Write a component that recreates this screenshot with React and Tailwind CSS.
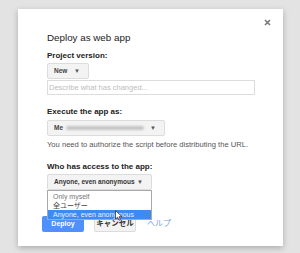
import React from "react";

const font = { fontFamily: '"Liberation Sans", Arial, "Noto Sans CJK JP", sans-serif' };

function Caret() {
  return <span className="text-[6px] text-[#555] leading-none">▼</span>;
}

function Select({ width, children }) {
  return (
    <div
      className={`flex items-center justify-between border border-[#dcdcdc] bg-[#f3f3f3] rounded-[2px] pl-[6px] pr-[8px] h-[16px] ${width}`}
    >
      {children}
      <Caret />
    </div>
  );
}

export default function App() {
  return (
    <div className="w-[300px] h-[253px] bg-[#e3e3e3] overflow-hidden pt-[9px] pl-[18px]" style={font}>
      <div className="relative w-[265px] h-[237px] bg-white shadow-[0_2px_6px_rgba(0,0,0,0.25)] pl-[29px] pt-[23px] text-[#222]">
        {/* close */}
        <button className="absolute top-[10px] right-[12px] w-[7px] h-[7px]">
          <svg viewBox="0 0 7 7" width="7" height="7">
            <path d="M1 1L6 6M6 1L1 6" stroke="#777" strokeWidth="1.6" />
          </svg>
        </button>

        <h2 className="text-[9.8px] leading-[12px] text-[#222]">Deploy as web app</h2>

        <div className="mt-[7px] text-[8px] leading-[10px] font-bold">Project version:</div>
        <div className="mt-[2px]">
          <Select width="w-[42px]">
            <span className="text-[6.5px] font-bold text-[#444]">New</span>
          </Select>
        </div>
        <div className="mt-[1px] w-[208px] h-[15px] border border-[#dcdcdc] flex items-center pl-[1px]">
          <span className="text-[7.5px] text-[#bdbdbd]">Describe what has changed...</span>
        </div>

        <div className="mt-[12px] text-[8px] leading-[10px] font-bold">Execute the app as:</div>
        <div className="mt-[3px]">
          <Select width="w-[118px]">
            <div className="flex items-center gap-[3px]">
              <span className="text-[6.5px] font-bold text-[#444]">Me</span>
              <div className="w-[78px] h-[4px] rounded-full bg-[#c4c4c4] blur-[1px]" />
            </div>
          </Select>
        </div>
        <div className="mt-[4px] text-[7.6px] leading-[9px] text-[#555]">
          You need to authorize the script before distributing the URL.
        </div>

        <div className="mt-[13px] text-[8px] leading-[10px] font-bold">Who has access to the app:</div>
        <div className="relative mt-[2px] w-[105px]">
          <Select width="w-[105px]">
            <span className="text-[6.5px] font-bold text-[#333]">Anyone, even anonymous</span>
          </Select>
          <div className="absolute left-0 top-[16px] z-10 w-[105px] bg-white border border-[#a9a9a9] pt-[1px] text-[7px] leading-[9px]">
            <div className="pl-[5px] text-[#777]">Only myself</div>
            <div className="pl-[5px] text-[#444]">全ユーザー</div>
            <div className="pl-[5px] bg-[#3d8af7] text-[#e9f1ff]">Anyone, even anonymous</div>
            <svg className="absolute left-[67px] top-[19px]" width="8" height="11" viewBox="0 0 8 11">
              <path d="M0.5 0.5L0.5 9L2.6 7.2L4 10.3L5.4 9.7L4.1 6.7L7 6.7Z" fill="#fff" stroke="#333" strokeWidth="0.8" />
            </svg>
          </div>
        </div>

        <div className="mt-[26px] -ml-[5px] flex items-center">
          <button className="w-[42px] h-[16px] bg-[#4d90fe] rounded-[2px] text-white text-[7px] font-bold">Deploy</button>
          <button className="ml-[10px] w-[42px] h-[16px] bg-[#f3f3f3] border border-[#dcdcdc] rounded-[2px] text-[#333] text-[7.5px] font-bold">
            キャンセル
          </button>
          <span className="ml-[11px] text-[8px] text-[#7b9fd4]">ヘルプ</span>
        </div>
      </div>
    </div>
  );
}
